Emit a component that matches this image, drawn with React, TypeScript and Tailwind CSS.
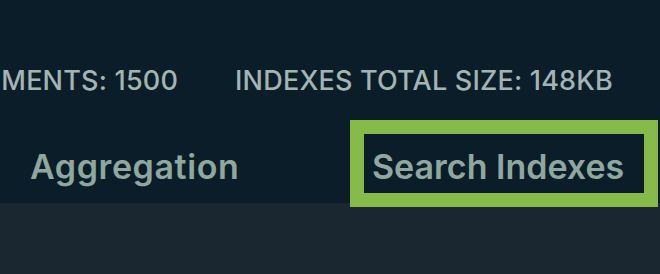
import React from "react";

const font = { fontFamily: "Inter, 'Noto Sans', sans-serif" };

export default function App() {
  return (
    <div
      className="w-[660px] h-[274px] bg-[#0c1d2a] flex flex-col overflow-hidden"
      style={font}
    >
      <div className="h-[203px] flex flex-col">
        {/* collection stats */}
        <div className="mt-[62px] h-[38px] flex justify-end items-center pr-[47px] gap-[57px] whitespace-nowrap text-[27px] font-medium tracking-[0.2px] text-[#a3b5b3]">
          <span>DOCUMENTS: 1500</span>
          <span>INDEXES TOTAL SIZE: 148KB</span>
        </div>

        {/* tabs */}
        <div className="mt-[20px] flex items-start whitespace-nowrap">
          <div className="pl-[30px] w-[350px] h-[92px] flex items-center text-[34px] font-semibold tracking-[0.6px] text-[#8fa89f]">
            Aggregation
          </div>
          <div className="relative z-10 h-[87px] w-[308px] border-[14px] border-[#86bb4b] flex items-center pl-[8px] pt-[5px] text-[34px] font-semibold tracking-[0px] text-[#8fa89f]">
            Search Indexes
          </div>
        </div>
      </div>
      <div className="flex-1 bg-[#1b2730]" />
    </div>
  );
}
